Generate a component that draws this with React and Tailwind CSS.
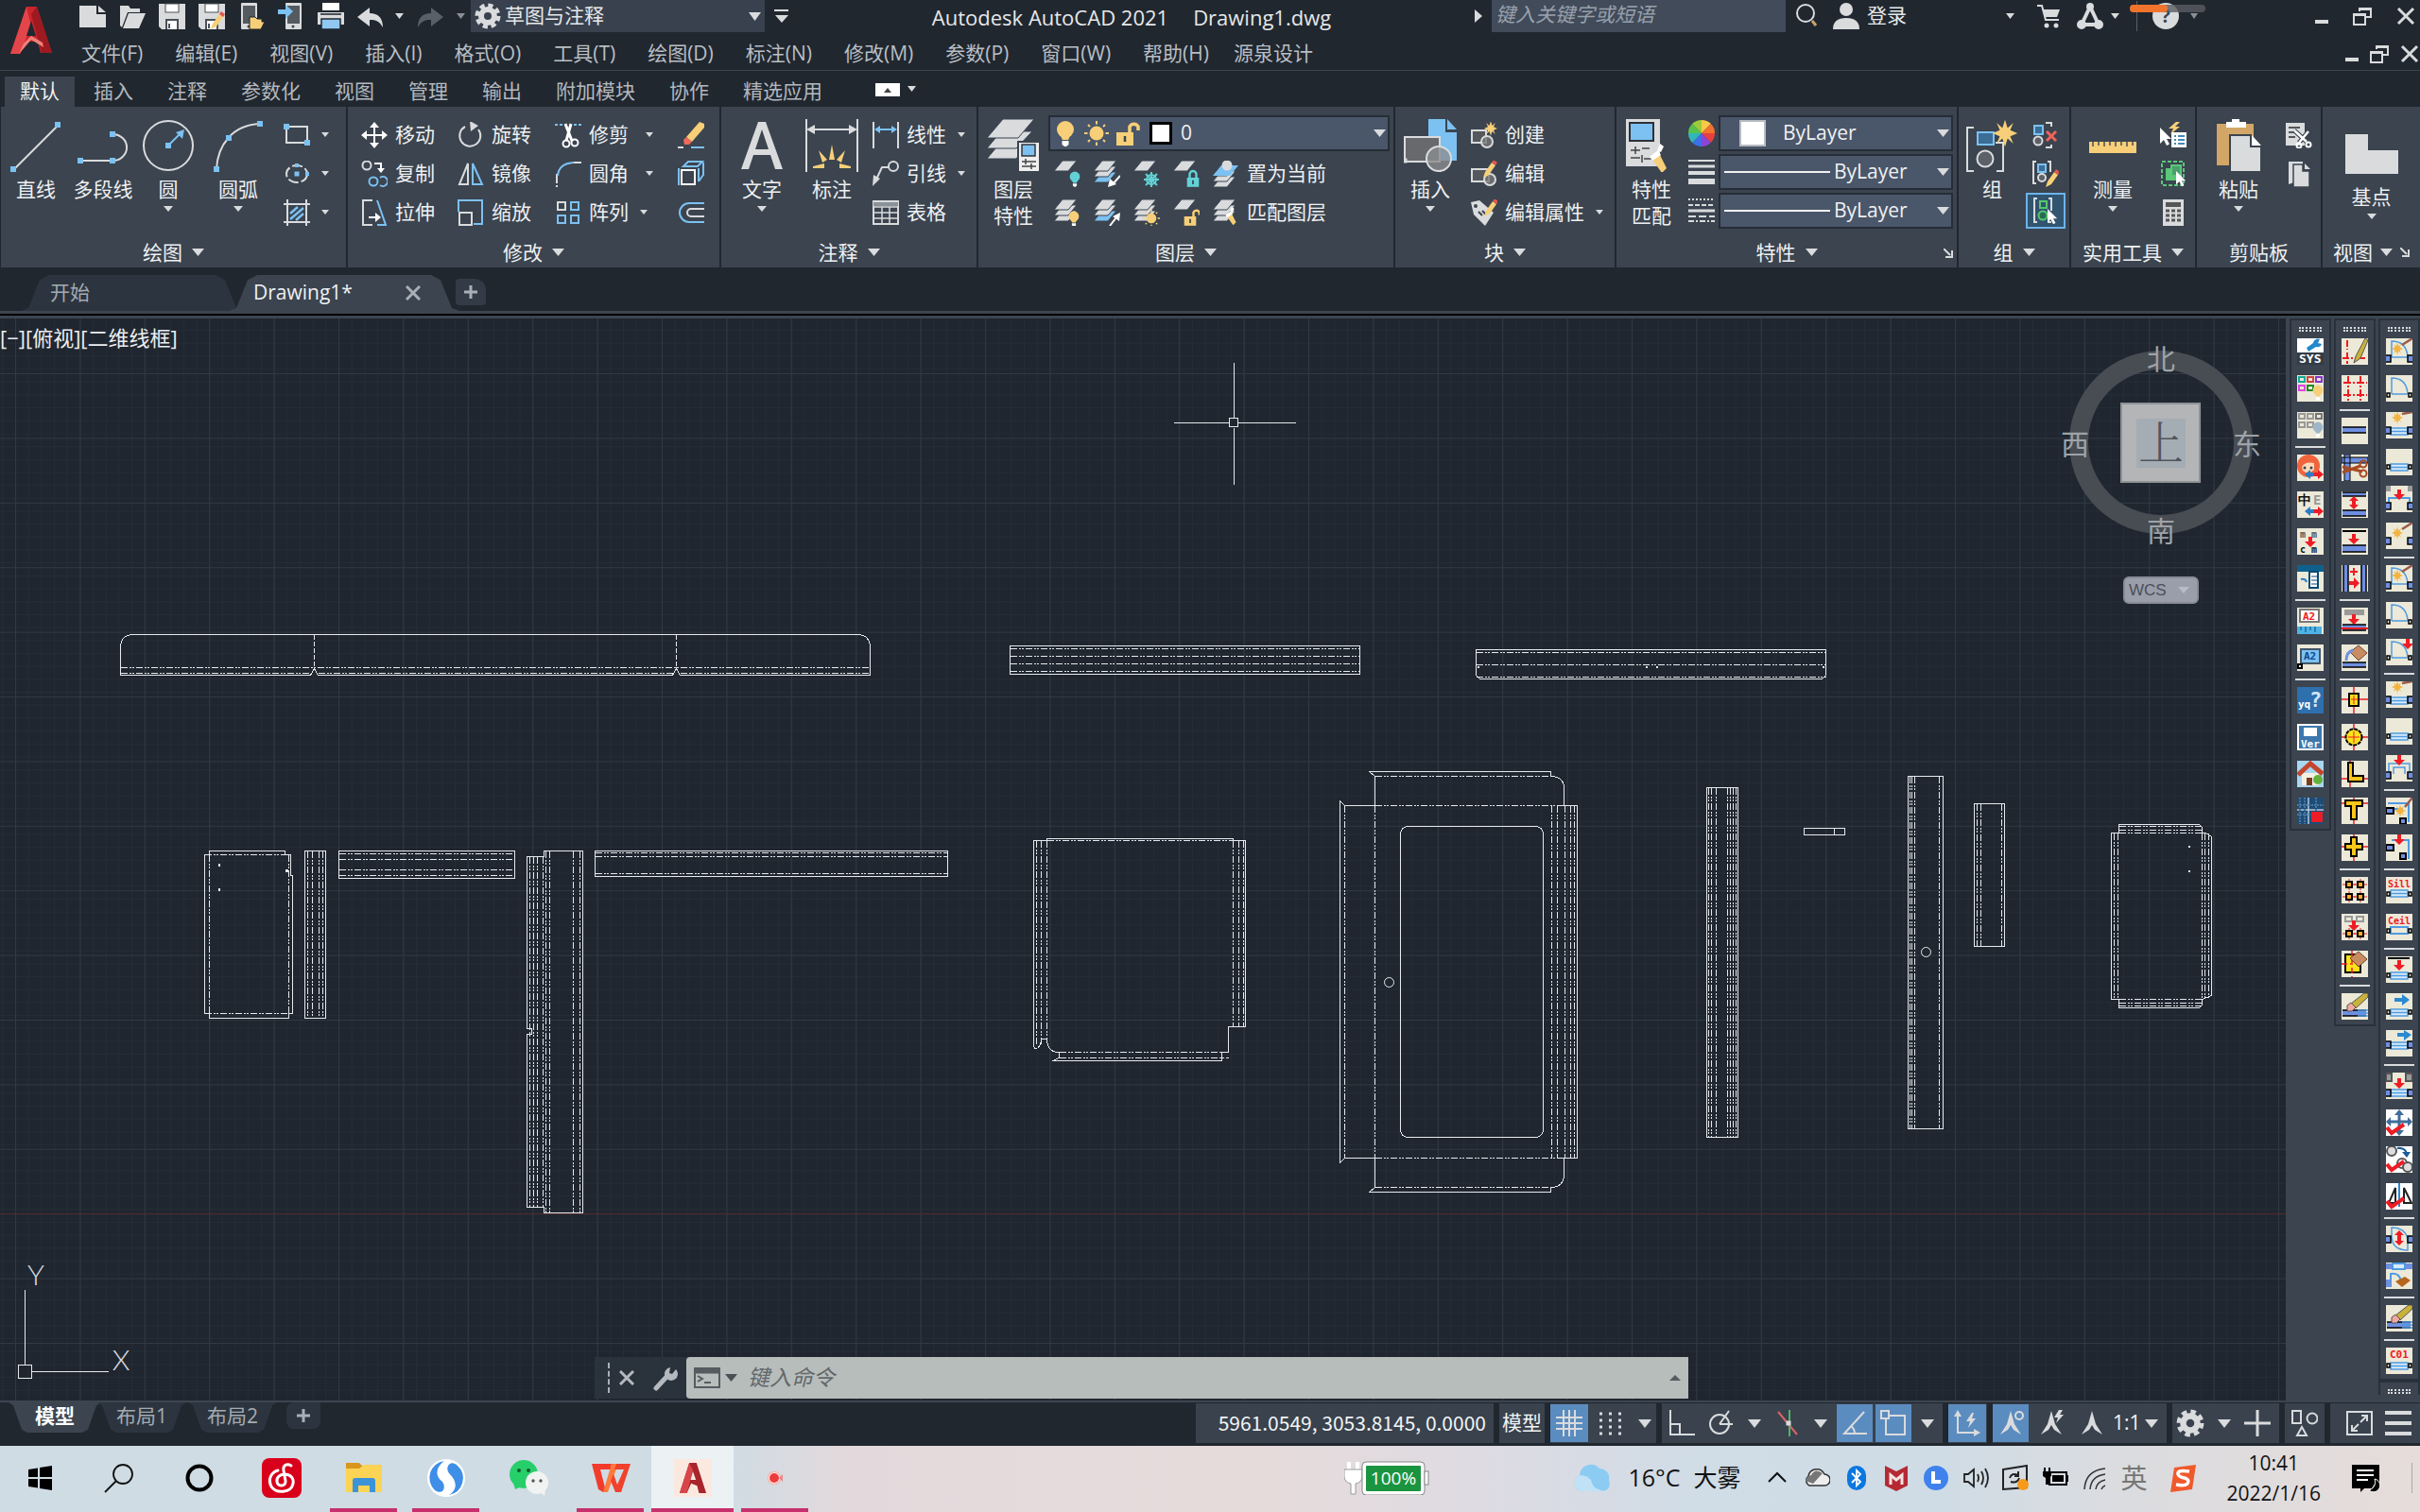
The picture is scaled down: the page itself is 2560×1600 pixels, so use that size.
import React from "react";

const W = "#d9dbdd";
const B = "#7cc1f2";
const Y = "#f7cf78";
const T = "#62d2d6";

/* ---------- shared pieces ---------- */

function Tri({ w = 10, h = 6, up = false, c = W }) {
  return (
    <svg width={w} height={h} viewBox="0 0 10 6" preserveAspectRatio="none" className="shrink-0">
      <path d={up ? "M0 6L5 0L10 6Z" : "M0 0H10L5 6Z"} fill={c} />
    </svg>
  );
}

function Ico({ s = 28, children }) {
  return (
    <svg width={s} height={s} viewBox={`0 0 ${s} ${s}`} fill="none" stroke={W} strokeWidth="2" className="shrink-0">
      {children}
    </svg>
  );
}

const Sq = ({ x, y, s = 6, c = B }) => <rect x={x - s / 2} y={y - s / 2} width={s} height={s} fill={c} stroke="none" />;

function Big({ label, icon, caret, className = "" }) {
  return (
    <button className={`flex shrink-0 flex-col items-center pt-1 leading-7 ${className}`}>
      <Ico s={56}>{icon}</Ico>
      <span className="mt-1 whitespace-pre-line">{label}</span>
      {caret && <span className="flex pt-1"><Tri /></span>}
    </button>
  );
}

function Small({ label, icon, caret, aria, className = "" }) {
  return (
    <button aria-label={aria || label} className={`flex h-[41px] items-center gap-2 whitespace-nowrap ${className}`}>
      <Ico>{icon}</Ico>
      {label}
      {caret && <span className={`flex ${caret === "wide" ? "ml-2.5" : "ml-1"}`}><Tri w={8} h={5} /></span>}
    </button>
  );
}

function Panel({ title, caret = true, corner, className = "", children }) {
  return (
    <section className={`flex h-[170px] min-w-0 flex-col justify-between overflow-hidden bg-[#3b444f] pt-[9px] ${className}`}>
      <div className="flex">{children}</div>
      <div className="relative flex h-8 items-center justify-center gap-2.5 leading-8">
        {title}
        {caret && <Tri w={13} h={8} />}
        {corner && (
          <button aria-label={`${title}设置`} className="absolute right-1 top-3">
            <svg width="10" height="10" viewBox="0 0 10 10" fill="none" stroke={W} strokeWidth="2"><path d="M0 0L7 7M9 2V9H2" /></svg>
          </button>
        )}
      </div>
    </section>
  );
}

/* ---------- ribbon drawings ---------- */

const Stack = ({ x = 0, y = 0, c = W, n = 3, last }) => (
  <g stroke="none">
    {Array.from({ length: n }, (_, i) => n - 1 - i).map((i) => (
      <path key={i} d={`M${x} ${y + 11 + i * 6}L${x + 9} ${y + i * 6}H${x + 24}L${x + 15} ${y + 11 + i * 6}Z`} fill={i === n - 1 && last ? last : c} stroke="#3b444f" strokeWidth="1" />
    ))}
  </g>
);
const Bulb = ({ x, y, c = Y, s = 1 }) => (
  <g stroke="none" transform={`translate(${x} ${y}) scale(${s})`}>
    <circle cx="0" cy="0" r="9" fill={c} /><path d="M-6 5H6L3 11H-3Z" fill={c} /><path d="M-3.500 12H3.500V16L1 18H-1L-3.500 16Z" fill="#fff" />
  </g>
);
const Sun = ({ x, y, s = 1 }) => (
  <g transform={`translate(${x} ${y}) scale(${s})`} stroke={Y}>
    <circle r="7.500" fill={Y} stroke="none" />
    <path d="M0 -13V-9.500M0 9.500V13M-13 0H-9.500M9.500 0H13M-9 -9L-7 -7M7 7L9 9M-9 9L-7 7M7 -7L9 -9" />
  </g>
);
const Lock = ({ x, y, c = Y, s = 1, open }) => (
  <g transform={`translate(${x} ${y}) scale(${s})`}>
    <rect x="-9" y="0" width="18" height="14" fill={c} stroke="none" />
    <path d={open ? "M5 0V-6A5 5 0 0 1 14 -6V-2" : "M-5 0V-5A5 5 0 0 1 5 -5V0"} stroke={c} strokeWidth="3.500" />
    <path d="M0 4V10" stroke="#3b444f" strokeWidth="2.500" />
  </g>
);
const Pencil = ({ x, y }) => (
  <g stroke="none" transform={`translate(${x} ${y})`}>
    <path d="M0 14L2 8L9 -2L13 1L6 11Z" fill={Y} /><path d="M9 -2L11 -5L15 -2L13 1Z" fill="#e0584f" />
  </g>
);
const Burst = ({ x, y, s = 1, c = Y }) => (
  <path transform={`translate(${x} ${y}) scale(${s})`} stroke="none" fill={c} d="M0 -13L2.500 -5L8 -10L5 -3L12 0L5 3L8 10L2.500 5L0 13L-2.500 5L-8 10L-5 3L-12 0L-5 -3L-8 -10L-2.500 -5Z" />
);
const Cursor = ({ x, y, s = 1 }) => (
  <path transform={`translate(${x} ${y}) scale(${s})`} d="M0 0V17L4 13L7 19L10 17.500L7 12H12Z" fill="#fff" stroke="none" />
);
const Brush = ({ x, y, s = 1 }) => (
  <g stroke="none" transform={`translate(${x} ${y}) scale(${s})`}>
    <path d="M0 6L8 0L17 18L12 23Z" fill={Y} /><path d="M-1 6L8 -1L11 4L2 10Z" fill="#fff" /><path d="M8 -6L12 -3L9 3L5 1Z" fill="#fff" transform="translate(2 -2)" />
  </g>
);

const R = {
  line: <><path d="M4 54L52 6" /><Sq x={4} y={53} /><Sq x={51} y={6} /></>,
  pline: <><path d="M4 44H38A14 13 0 0 0 38 16" /><Sq x={4} y={44} /><Sq x={38} y={44} /><Sq x={38} y={16} /></>,
  circle: <><circle cx="28" cy="28" r="26" /><path d="M28 28L42 14" stroke={B} /><path d="M36 14L45 11L43 21Z" fill={B} stroke="none" /><Sq x={28} y={28} /></>,
  arc: <><path d="M5 53C6 28 22 6 51 5" /><Sq x={5} y={53} /><Sq x={18} y={20} /><Sq x={51} y={5} /></>,
  rect: <><rect x="3" y="5" width="22" height="17" /><Sq x={3} y={5} /><Sq x={25} y={22} /></>,
  ellipse: <><ellipse cx="14" cy="14" rx="11" ry="9" strokeDasharray="11 3" /><Sq x={14} y={14} s={5} /><Sq x={25} y={14} s={4} /><Sq x={14} y={5} s={4} /></>,
  hatch: <><path d="M0 5H28M0 24H28M4 0V28M24 0V28" /><path d="M7 15L15 8M7 21L21 9M13 22L21 15" stroke={B} strokeWidth="2.500" /></>,
  move: <g fill="#fff" stroke="#fff"><path d="M14 4V24M4 14H24" /><path d="M14 0L19 6H9ZM14 28L19 22H9ZM0 14L6 9V19ZM28 14L22 9V19Z" stroke="none" /></g>,
  rotate: <><path d="M8 5A11 11 0 1 0 22 8" /><path d="M13 -1L22 4L14 10Z" fill={W} stroke="none" /></>,
  trim: <><path d="M0 3H8M20 3H28" strokeDasharray="3 2" stroke={B} /><path d="M11 2L18 20M17 2L12 20" stroke="#fff" strokeWidth="3" /><circle cx="12" cy="23" r="3.500" stroke="#fff" /><circle cx="21" cy="22" r="3.500" stroke="#fff" /></>,
  erase: <><g stroke="none"><path d="M9 16L23 0L28 2V6L15 21Z" fill={Y} /><path d="M6 19L9 16L15 21L12 24H7Z" fill="#ef6a5b" /></g><path d="M0 27H6" /><path d="M14 27H28" stroke={B} /></>,
  copy: <><circle cx="6" cy="5" r="4.500" /><path d="M14 3H21V10" stroke="#fff" /><path d="M17 8H25L21 13Z" fill="#fff" stroke="none" /><circle cx="13" cy="22" r="4.500" stroke={B} /><path d="M20 18A5 5 0 1 1 20 26" stroke={B} /></>,
  mirror: <><path d="M11 3V25H2Z" /><path d="M16 3V25H26Z" stroke={B} /></>,
  fillet: <><path d="M2 14V28M20 2H28" strokeDasharray="10 2" /><path d="M3 16Q4 3 20 2" stroke={B} /></>,
  box: <><rect x="4" y="10" width="14" height="15" stroke="#fff" /><path d="M1 8V26M6 6L11 1H26L21 6ZM22 22L27 15V2M22 8V22" stroke={B} /></>,
  stretch: <><path d="M12 27H2V1H12" /><path d="M17 1L26 27H17" stroke={B} /><path d="M8 19H17" stroke="#fff" /><path d="M15 14V24L21 19Z" fill="#fff" stroke="none" /></>,
  scale: <><path d="M1 13V1H26V26H17" stroke={B} /><rect x="2" y="14" width="13" height="13" /></>,
  array: <><rect x="3" y="3" width="8" height="8" /><g stroke={B}><rect x="17" y="3" width="8" height="8" /><rect x="3" y="17" width="8" height="8" /><rect x="17" y="17" width="8" height="8" /></g></>,
  offset: <><path d="M28 4H12A10 10 0 0 0 12 24H28" stroke={B} /><path d="M28 10H14A4 4 0 0 0 14 18H28" /></>,
  dim: <><path d="M1 0V56M55 0V56M5 11H51" /><path d="M1 11L10 6V16ZM55 11L46 6V16Z" fill={W} stroke="none" /><g fill={Y} stroke="none"><path d="M28 27L31 43H25ZM14 33L23 43L18 46ZM42 33L33 43L38 46ZM8 50L20 47V52H8ZM48 50L36 47V52H48Z" /></g></>,
  linear: <><path d="M1 0V28M27 0V28" /><path d="M4 8H24" stroke={B} /><path d="M2 8L8 4V12ZM26 8L20 4V12Z" fill={B} stroke="none" /></>,
  leader: <><circle cx="22" cy="6" r="5" /><path d="M17 7H10L3 22" /><path d="M0 27L1 15L8 19Z" fill={W} stroke="none" /></>,
  table: <><rect x="1" y="2" width="26" height="24" /><path d="M1 8H27M1 14H27M1 20H27M10 8V26M18 8V26" strokeWidth="1.500" /><path d="M1 5H27" strokeWidth="4" stroke="#8b929a" /></>,
  layers: <><g stroke="#3b444f" strokeWidth="1"><path d="M0 42L15 24H45L31 42Z" fill={W} /><path d="M0 31L15 13H48L31 31Z" fill={W} /><path d="M0 20L17 0H50L33 20Z" fill={W} /></g><rect x="33" y="24" width="23" height="32" fill="#eee" stroke="#3b444f" /><rect x="37" y="27" width="14" height="12" fill={B} stroke="#30353c" strokeWidth="1.500" /><path d="M37 45H52M37 50H52M41 42V48M47 47V53" stroke="#444" strokeWidth="1.500" /></>,
  l1: <><Stack y={0} n={1} /><Bulb x={22} y={17} c={T} s={0.6} /></>,
  l2: <><Stack last={B} /><path d="M28 16L20 25" stroke="#fff" /><path d="M15 28L17 19L24 25Z" fill="#fff" stroke="none" /></>,
  l3: <><Stack n={1} /><path d="M19 12V28M11 20H27M13 14L25 26M25 14L13 26" stroke={T} /><circle cx="19" cy="20" r="5" stroke={T} /></>,
  l4: <><Stack n={1} /><Lock x={21} y={18} c={T} s={0.7} /></>,
  l5: <><Stack x={0} y={5} n={3} /><path d="M0 16L9 5H27L18 16Z" fill={B} stroke="none" /><circle cx="15" cy="5" r="5.500" fill={W} stroke="none" /></>,
  l6: <><Stack /><Bulb x={21} y={18} s={0.6} /></>,
  l7: <><Stack last={B} /><path d="M17 28L24 19" stroke="#fff" /><path d="M28 14L27 23L20 18Z" fill="#fff" stroke="none" /></>,
  l8: <><Stack /><Sun x={19} y={20} s={0.7} /></>,
  l9: <><Stack n={1} /><Lock x={18} y={18} s={0.7} open /></>,
  l10: <><Stack /><Brush x={14} y={13} s={0.62} /></>,
  insert: <><path d="M26 0H44V14H56V44H26Z" fill={B} stroke="none" /><path d="M46 0L56 11H46Z" fill={B} stroke="none" /><rect x="1" y="19" width="37" height="26" fill="#67696c" /><circle cx="37" cy="42" r="13" fill="#8b8d90" fillOpacity=".8" /><Sq x={1} y={44} s={5} c={W} /></>,
  create: <><rect x="1" y="9" width="15" height="13" fill="#55585c" /><circle cx="17" cy="21" r="6" fill="#777" fillOpacity=".8" /><Burst x={21} y={7} s={0.6} /></>,
  editb: <><rect x="1" y="9" width="18" height="13" fill="#55585c" /><circle cx="20" cy="20" r="6" fill="#777" fillOpacity=".8" /><Pencil x={13} y={4} /></>,
  attr: <><path d="M0 3L9 1L24 14L15 28L3 16Z" fill={W} stroke="none" /><circle cx="5" cy="7" r="2" fill="#3b444f" stroke="none" /><path d="M8 13L12 17M12 12L16 16" stroke="#3b444f" /><Pencil x={14} y={4} /></>,
  match: <><rect x="1" y="0" width="36" height="50" fill={W} stroke="none" /><rect x="5" y="4" width="25" height="19" fill={B} stroke="#2c3137" /><path d="M6 33H16M6 41H16M11 29V37M18 38V46M18 31H26M20 42H28" stroke="#444" strokeWidth="1.500" /><Brush x={27} y={34} /></>,
  lw: <g stroke={W}><path d="M0 2H28" /><path d="M0 8H28" strokeWidth="3" /><path d="M0 15H28" strokeWidth="4" /><path d="M0 24H28" strokeWidth="6" /></g>,
  lt: <g stroke={W}><path d="M0 2H28" strokeDasharray="2 2" /><path d="M0 8H28" strokeDasharray="5 2" /><path d="M0 14H28" strokeWidth="3" /><path d="M0 20H28" strokeDasharray="8 3" /><path d="M0 25H28" strokeDasharray="6 2 2 2" /></g>,
  group: <><path d="M8 9H1V55H8M31 25H39V55H32" /><rect x="12" y="14" width="17" height="13" fill="#3b6d96" stroke={B} /><circle cx="20" cy="42" r="8.500" fill="#5c6168" /><Burst x={41} y={15} s={1.1} /></>,
  ungroup: <><path d="M14 1H20V5M20 24V27H14" /><rect x="2" y="4" width="9" height="9" fill="#3b6d96" stroke={B} /><circle cx="6" cy="20" r="4.500" fill="#5c6168" /><path d="M15 10L25 20M25 10L15 20" stroke="#f0635c" strokeWidth="3" /></>,
  gedit: <><path d="M4 1H1V24H4M16 1H19V12" /><rect x="6" y="4" width="8" height="8" fill="#3b6d96" stroke={B} /><circle cx="10" cy="18" r="4" fill="#5c6168" /><Pencil x={14} y={14} /></>,
  gsel: <><path d="M5 1H2V26H5M17 1H20V14M16 26H20" /><rect x="8" y="4" width="7" height="7" stroke="#54c66e" /><circle cx="11" cy="19" r="4.500" stroke="#54c66e" fill="#2b6a52" /><Cursor x={16} y={12} s={0.85} /></>,
  ruler: <><rect x="3" y="24" width="50" height="12" fill={Y} stroke="none" /><path d="M7 24V29M13 24V28M19 24V29M25 24V28M31 24V29M37 24V28M43 24V29M49 24V28" stroke="#4b4f55" strokeWidth="1.500" /></>,
  qsel: <><rect x="12" y="11" width="16" height="16" fill="#fff" stroke="none" /><path d="M15 15H17M19 15H26M15 19H17M19 19H26M15 23H17M19 23H26" stroke="#4489b8" /><path d="M14 0L5 8H10L7 14L17 6H12L18 0Z" fill={Y} stroke="none" transform="translate(4 -1)" /><Cursor x={0} y={6} s={1} /></>,
  selall: <><rect x="2" y="1" width="23" height="25" stroke="#5ac779" strokeDasharray="4 2" /><rect x="7" y="9" width="11" height="11" fill="#5ac779" stroke="#5ac779" /><rect x="12" y="5" width="10" height="11" fill="#4a9f6d" stroke="#5ac779" /><Cursor x={17} y={11} s={0.85} /></>,
  calc: <><rect x="3" y="0" width="22" height="28" fill={W} stroke="none" /><rect x="6" y="3" width="16" height="5" fill="#555" stroke="none" /><path d="M6 12H22M6 17H22M6 22H22" stroke="#555" strokeWidth="3" strokeDasharray="4 2" /></>,
  paste: <><path d="M5 5H44V49H5Z" fill="#d1a667" stroke="none" /><path d="M15 3H21V0H29V3H36V9H15Z" fill="#fff" stroke="none" /><path d="M19 17H41V29H52V56H19Z" fill={W} stroke="#3b444f" /><path d="M42 17L52 28H42Z" fill="#fff" stroke="none" /></>,
  cut: <><rect x="0" y="1" width="20" height="24" fill={W} stroke="none" /><path d="M3 6H15M3 11H12M3 16H10" stroke="#555" /><path d="M9 9L22 21M24 10L14 22" stroke="#3b444f" strokeWidth="5" /><path d="M9 9L22 21M24 10L14 22" stroke="#fff" strokeWidth="2.500" /><circle cx="14" cy="25" r="2.500" stroke="#fff" /><circle cx="24" cy="24" r="2.500" stroke="#fff" /></>,
  copyclip: <><path d="M3 25V1H18V20" fill={W} stroke="none" /><path d="M8 4H18V11H25V28H8Z" fill={W} stroke="#3b444f" strokeWidth="1.500" /><path d="M20 3L26 9H20Z" fill={W} stroke="none" /></>,
  base: <path d="M0 8H24V25H56V50H0Z" fill={W} stroke="none" />,
};

const Wheel = () => (
  <Ico>
    {["#f7c948", "#f2722e", "#e8403f", "#8a45d8", "#3d6fe8", "#34b6b8", "#58c14e", "#9ccb3b"].map((c, i) => {
      const a = (i * Math.PI) / 4 - Math.PI / 2, b = a + Math.PI / 4;
      return <path key={c} stroke="none" fill={c} d={`M14 14L${14 + 14 * Math.cos(a)} ${14 + 14 * Math.sin(a)}A14 14 0 0 1 ${14 + 14 * Math.cos(b)} ${14 + 14 * Math.sin(b)}Z`} />;
    })}
  </Ico>
);

function PropSelect({ label, lead, className = "" }) {
  return (
    <label className="flex h-[41px]">
      <span className="flex h-[38px] flex-1 items-center border-2 border-[#262d36] bg-[#4a5669] pl-1 pr-0.5">
        {lead}
        <select aria-label={label} className={`min-w-0 flex-1 appearance-none bg-transparent outline-none ${className}`}>
          <option>ByLayer</option>
        </select>
        <Tri w={13} h={8} />
      </span>
    </label>
  );
}

function Ribbon() {
  return (
    <div className="flex gap-0.5 bg-[#20272f] pl-px text-[21px] text-[#eef0f2]">
      <Panel title="绘图" className="flex-[365_1_0%]">
        <Big className="w-[74px]" label="直线" icon={R.line} />
        <Big className="w-[68px]" label="多段线" icon={R.pline} />
        <Big className="w-[70px]" label="圆" icon={R.circle} caret />
        <Big className="w-[78px]" label="圆弧" icon={R.arc} caret />
        <div className="pl-[9px]">
          <Small aria="矩形" icon={R.rect} caret />
          <Small aria="椭圆" icon={R.ellipse} caret />
          <Small aria="图案填充" icon={R.hatch} caret />
        </div>
      </Panel>
      <Panel title="修改" className="flex-[393_1_0%]">
        <div className="grid grid-cols-[102px_103px_130px_28px] pl-3.5">
          <Small label="移动" icon={R.move} />
          <Small label="旋转" icon={R.rotate} />
          <Small label="修剪" icon={R.trim} caret="wide" />
          <Small aria="删除" icon={R.erase} />
          <Small label="复制" icon={R.copy} />
          <Small label="镜像" icon={R.mirror} />
          <Small label="圆角" icon={R.fillet} caret="wide" />
          <Small aria="分解" icon={R.box} />
          <Small label="拉伸" icon={R.stretch} />
          <Small label="缩放" icon={R.scale} />
          <Small label="阵列" icon={R.array} caret />
          <Small aria="偏移" icon={R.offset} />
        </div>
      </Panel>
      <Panel title="注释" className="flex-[270_1_0%]">
        <Big className="w-[86px]" label="文字" caret icon={<path d="M6 53L24 3H32L50 53H42L37 38H19L14 53ZM21 32H35L28 11Z" fill={W} stroke="none" />} />
        <Big className="w-[62px]" label="标注" icon={R.dim} />
        <div className="pl-3">
          <Small label="线性" icon={R.linear} caret />
          <Small label="引线" icon={R.leader} caret />
          <Small label="表格" icon={R.table} />
        </div>
      </Panel>
      <Panel title="图层" className="flex-[439_1_0%]">
        <Big className="w-[74px]" label={"图层\n特性"} icon={R.layers} />
        <div className="min-w-0 flex-1 pr-1">
          <label className="flex h-[41px]">
            <span className="flex h-[38px] flex-1 items-center gap-[5px] border-2 border-[#262d36] bg-[#4a5669] pl-0.5 pr-0.5">
              <Ico><Bulb x={14} y={10} /></Ico>
              <Ico><Sun x={14} y={14} /></Ico>
              <Ico><Lock x={11} y={13} open /></Ico>
              <span className="ml-1 h-6 w-6 border-[3px] border-black bg-white" />
              <select aria-label="图层" className="ml-1 min-w-0 flex-1 appearance-none bg-transparent outline-none"><option>0</option></select>
              <Tri w={13} h={8} />
            </span>
          </label>
          {[["置为当前", ["l1", "l2", "l3", "l4", "l5"]], ["匹配图层", ["l6", "l7", "l8", "l9", "l10"]]].map(([t, ks]) => (
            <div key={t} className="flex items-center">
              {ks.slice(0, 4).map((k) => <Small key={k} aria={`图层工具 ${k}`} icon={R[k]} className="w-[42px] pl-1.5" />)}
              <Small label={t} icon={R[ks[4]]} className="pl-1.5" />
            </div>
          ))}
        </div>
      </Panel>
      <Panel title="块" className="flex-[232_1_0%]">
        <Big className="w-[74px]" label="插入" icon={R.insert} caret />
        <div className="pl-1.5">
          <Small label="创建" icon={R.create} />
          <Small label="编辑" icon={R.editb} />
          <Small label="编辑属性" icon={R.attr} caret />
        </div>
      </Panel>
      <Panel title="特性" corner className="flex-[360_1_0%]">
        <Big className="w-[74px]" label={"特性\n匹配"} icon={R.match} />
        <div className="flex w-8 flex-col items-center">
          <button aria-label="颜色" className="h-[41px] pb-1"><Wheel /></button>
          <Small aria="线宽" icon={R.lw} className="pb-1" />
          <Small aria="线型" icon={R.lt} className="pb-1" />
        </div>
        <div className="min-w-0 flex-1 pl-0.5 pr-1">
          <PropSelect label="对象颜色" className="ml-[18px]" lead={<span className="ml-4 h-7 w-7 border-2 border-[#b8bcc2] bg-white" />} />
          <PropSelect label="线宽" className="ml-1" lead={<span className="h-0.5 w-28 bg-[#f2f2f2]" />} />
          <PropSelect label="线型" className="ml-1" lead={<span className="h-0.5 w-28 bg-[#f2f2f2]" />} />
        </div>
      </Panel>
      <Panel title="组" className="flex-[117_1_0%]">
        <Big className="w-[71px]" label="组" icon={R.group} />
        <div className="flex w-[42px] flex-col items-center">
          <Small aria="解除编组" icon={R.ungroup} />
          <Small aria="组编辑" icon={R.gedit} />
          <button aria-label="启用组选择" className="flex h-[38px] w-[42px] items-center justify-center border-2 border-[#6cb3e8] bg-[#31546f]"><Ico>{R.gsel}</Ico></button>
        </div>
      </Panel>
      <Panel title="实用工具" className="flex-[131_1_0%]">
        <Big className="w-[88px]" label="测量" icon={R.ruler} caret />
        <div className="flex w-10 flex-col items-center">
          <Small aria="快速选择" icon={R.qsel} />
          <Small aria="全部选择" icon={R.selall} />
          <Small aria="快速计算器" icon={R.calc} />
        </div>
      </Panel>
      <Panel title="剪贴板" caret={false} className="flex-[131_1_0%]">
        <Big className="w-[88px]" label="粘贴" icon={R.paste} caret />
        <div className="flex w-10 flex-col items-center">
          <Small aria="剪切" icon={R.cut} />
          <Small aria="复制剪裁" icon={R.copyclip} />
        </div>
      </Panel>
      <section className="flex h-[170px] min-w-0 flex-[103_1_0%] flex-col items-center justify-between overflow-hidden bg-[#3b444f] pt-[9px]">
        <Big className="pt-3" label="基点" icon={R.base} caret />
        <div className="flex h-8 items-center gap-2 leading-8">
          视图
          <Tri w={13} h={8} />
          <button aria-label="视图设置">
            <svg width="10" height="10" viewBox="0 0 10 10" fill="none" stroke={W} strokeWidth="2"><path d="M0 0L7 7M9 2V9H2" /></svg>
          </button>
        </div>
      </section>
    </div>
  );
}

/* ---------- title bar and menus ---------- */

const Floppy = () => <><path d="M0 1H28V28H3L0 25Z" fill={W} stroke="none" /><rect x="7" y="1" width="14" height="9" fill="#fff" stroke="#4a5058" strokeWidth="1" /><path d="M7 17H21V28H7Z" fill="#4a5058" stroke="none" /><path d="M9 19H19V28H9Z" fill="#fff" stroke="none" /><path d="M11 22V27" stroke="#4a5058" /></>;
const Phone = () => <><rect x="3" y="0" width="17" height="28" rx="1" fill={W} stroke="none" /><rect x="5" y="3" width="13" height="19" fill="#555a60" stroke="none" /><circle cx="11" cy="25" r="1.500" fill="#444" stroke="none" /></>;
const Q = {
  新建: <path d="M0 3H18V12H28V26H0ZM20 3L28 10H20Z" fill={W} stroke="none" />,
  打开: <path d="M1 24V3H10L12 6H22V10H9L3 26ZM10 11H28L21 27H4Z" fill={W} stroke="none" />,
  保存: <Floppy />,
  另存为: <><Floppy /><Pencil x={13} y={14} /></>,
  打开移动: <><Phone /><path d="M12 28V15H18L20 17H25V20L28 20L24 28Z" fill={Y} stroke="#20272f" strokeWidth="1" /></>,
  保存移动: <><g transform="translate(5 0)"><Phone /></g><path d="M0 7H8V2L16 9L8 17V12H0Z" fill={B} stroke="none" /></>,
  打印: <><path d="M5 0H23V8H5Z" fill="#fff" stroke="none" /><path d="M0 10H28V23H0Z" fill={W} stroke="none" /><path d="M3 12H25" stroke="#4a5058" /><path d="M4 17H24V28H4Z" fill="#8fc9f2" stroke="#20272f" strokeWidth="1.500" /></>,
  放弃: <path d="M0 15L13 5V11C22 11 27 16 27 26C23 19 20 18 13 18V25Z" fill={W} stroke="none" />,
  重做: <path d="M28 15L15 5V11C6 11 1 16 1 26C5 19 8 18 15 18V25Z" fill="#5a6068" stroke="none" />,
};

const Gear = ({ s = 28, c = W }) => (
  <svg width={s} height={s} viewBox="0 0 28 28" className="shrink-0">
    <circle cx="14" cy="14" r="11" fill="none" stroke={c} strokeWidth="5" strokeDasharray="5 3.640" />
    <circle cx="14" cy="14" r="7" fill="none" stroke={c} strokeWidth="6" />
  </svg>
);

function WinBtns({ gap }) {
  return (
    <div className={`flex items-center ${gap}`}>
      <button aria-label="最小化"><svg width="14" height="20" viewBox="0 0 14 20"><rect y="14" width="14" height="4" fill={W} /></svg></button>
      <button aria-label="还原"><svg width="20" height="20" viewBox="0 0 20 20" fill="none" stroke={W} strokeWidth="2"><path d="M7 5V2H19V11H14M7 3H19M1 8H13V19H1ZM1 9H13" /></svg></button>
      <button aria-label="关闭"><svg width="20" height="20" viewBox="0 0 20 20" stroke={W} strokeWidth="3"><path d="M2 2L18 18M18 2L2 18" /></svg></button>
    </div>
  );
}

const MENUS = ["文件(F)", "编辑(E)", "视图(V)", "插入(I)", "格式(O)", "工具(T)", "绘图(D)", "标注(N)", "修改(M)", "参数(P)", "窗口(W)", "帮助(H)"];
const TABS = ["插入", "注释", "参数化", "视图", "管理", "输出", "附加模块", "协作", "精选应用"];

const LogoA = ({ w, h }) => (
  <svg width={w} height={h} viewBox="0 0 44 50" className="shrink-0">
    <path d="M17 0H28L44 49H32L29 37H19L14 44L10 50H0Z" fill="#c9252b" />
    <path d="M17 0L19 9L22 20L10 50H0Z" fill="#e2464a" />
    <path d="M28 0L44 49H33L22 8Z" fill="#9c1a20" />
    <path d="M14 39L22 31L34 38L35 43L22 35L9 50Z" fill="#f08079" />
    <path d="M22 15L27 31H17Z" fill="#20272f" />
  </svg>
);

function TitleArea() {
  return (
    <header className="flex border-b border-[#3b434d] text-[21px] text-[#e6e8ea]">
      <button aria-label="应用程序菜单" className="flex w-[66px] items-center justify-center pb-2.5"><LogoA w={44} h={50} /></button>
      <div className="min-w-0 flex-1">
        <div className="flex h-9 items-start justify-between">
          <div className="flex h-[34px] items-center">
            <div className="flex items-center gap-3.5 pl-[18px]">
              {Object.entries(Q).slice(0, 8).map(([k, v]) => <button key={k} aria-label={k}><Ico>{v}</Ico></button>)}
            </div>
            <div className="flex items-center gap-3.5 pl-3">
              <Tri w={9} h={6} />
              <button aria-label="重做"><Ico>{Q.重做}</Ico></button>
              <Tri w={9} h={6} c="#8b9097" />
            </div>
            <label className="ml-1.5 flex h-[34px] w-[311px] items-center gap-1 bg-[#38414d] px-1">
              <Gear />
              <select aria-label="工作空间" className="flex-1 appearance-none bg-transparent outline-none"><option>草图与注释</option></select>
              <Tri w={13} h={9} />
            </label>
            <button aria-label="自定义快速访问工具栏" className="ml-2.5 flex flex-col items-center gap-1"><span className="h-0.5 w-[15px] bg-[#d9dbdd]" /><Tri w={14} h={8} /></button>
          </div>
          <h1 className="flex gap-[26px] whitespace-nowrap text-[22px] leading-9"><span>Autodesk AutoCAD 2021</span><span>Drawing1.dwg</span></h1>
          <div className="flex h-[34px] items-center">
            <svg width="8" height="14" viewBox="0 0 8 14" className="mr-2.5"><path d="M0 0L8 7L0 14Z" fill={W} /></svg>
            <input aria-label="搜索" placeholder="键入关键字或短语" className="h-[34px] w-[311px] bg-[#414b5a] px-1 pb-1 italic outline-none placeholder:text-[#98a0ab]" />
            <button aria-label="搜索" className="ml-2.5"><Ico><circle cx="11" cy="11" r="9" /><path d="M18 19L22 24" stroke="#c9a568" strokeWidth="3" /></Ico></button>
            <button className="ml-3 flex items-center gap-2"><Ico><circle cx="14" cy="7" r="7" fill={W} stroke="none" /><path d="M0 28Q0 16 14 16T28 28Z" fill={W} stroke="none" /></Ico>登录</button>
            <span className="ml-[105px]"><Tri w={9} h={6} /></span>
            <button aria-label="商店" className="ml-6"><Ico><path d="M0 3H5L9 18H23" /><path d="M6 7H24L21 15H8Z" fill={W} stroke="none" /><circle cx="10" cy="24" r="2.500" fill={W} stroke="none" /><circle cx="20" cy="24" r="2.500" fill={W} stroke="none" /></Ico></button>
            <button aria-label="Autodesk App Store" className="ml-3.5"><Ico><path d="M14 4L5 23H23Z" strokeWidth="4" strokeLinejoin="round" /><circle cx="5" cy="23" r="4" fill={W} /><circle cx="23" cy="23" r="4" fill={W} /><circle cx="14" cy="4" r="3" fill={W} /></Ico></button>
            <span className="ml-2"><Tri w={9} h={6} /></span>
            <span className="ml-[18px] h-8 w-px bg-[#5a6068]" />
            <div className="relative ml-4 flex items-center gap-3">
              <button aria-label="帮助" className="flex h-7 w-7 items-center justify-center rounded-full bg-[#d9dbdd] text-xl font-bold leading-7 text-[#3b444f]">?</button>
              <Tri w={8} h={6} c="#8b9097" />
              <span className="absolute -left-6 top-0.5 flex h-2 w-20 rounded bg-[#5a5d61]/80"><span className="w-10 rounded bg-[#f2742c]" /></span>
            </div>
            <div className="ml-[124px] pr-[5px]"><WinBtns gap="gap-[26px]" /></div>
          </div>
        </div>
        <div className="flex h-[38px] items-center justify-between pl-5 pt-1">
          <nav className="flex gap-[34px] whitespace-nowrap text-[#b9bec4]">
            {MENUS.map((m) => <button key={m}>{m}</button>)}
            <button className="-ml-2">源泉设计</button>
          </nav>
          <div className="pr-px"><WinBtns gap="gap-3" /></div>
        </div>
      </div>
    </header>
  );
}

function RibbonTabs() {
  return (
    <nav className="flex h-[38px] items-end pl-[5px] text-[21px] text-[#b3b8bf]">
      <button className="h-8 bg-[#3b444f] px-4 pb-0.5 leading-[30px] text-[#f0f2f4]">默认</button>
      <div className="flex gap-9 pb-0.5 pl-5 leading-[30px]">{TABS.map((t) => <button key={t}>{t}</button>)}</div>
      <button aria-label="最小化功能区" className="mb-[11px] ml-14 flex h-3.5 w-[26px] items-center justify-center bg-white"><Tri w={8} h={5} up c="#444" /></button>
      <span className="mb-4 ml-2"><Tri w={9} h={6} /></span>
    </nav>
  );
}

const tabUp = "[clip-path:polygon(0_100%,8px_92%,20px_14%,30px_0,calc(100%-30px)_0,calc(100%-20px)_14%,calc(100%-8px)_92%,100%_100%)]";
const tabDown = "[clip-path:polygon(0_0,100%_0,calc(100%-5px)_10%,calc(100%-14px)_90%,calc(100%-20px)_100%,20px_100%,14px_90%,5px_10%)]";

function FileTabs() {
  return (
    <div className="flex h-[46px] items-end pl-[22px] text-[21px]">
      <button className={`h-[38px] w-[236px] bg-[#2c353f] pl-[31px] text-left text-[#a4aab1] ${tabUp}`}>开始</button>
      <div className={`-ml-4 flex h-[38px] w-[244px] items-center justify-between bg-[#3b444f] pl-[26px] pr-[41px] text-[#eef0f2] ${tabUp}`}>
        <span>Drawing1*</span>
        <button aria-label="关闭图形"><svg width="16" height="16" viewBox="0 0 16 16" stroke="#a9afb6" strokeWidth="3"><path d="M1 1L15 15M15 1L1 15" /></svg></button>
      </div>
      <button aria-label="新图形" className="-ml-1 mb-1.5 flex h-7 w-8 items-center justify-center rounded rounded-tr-xl bg-[#323b46]"><svg width="14" height="14" viewBox="0 0 14 14" stroke="#a9afb6" strokeWidth="3"><path d="M7 0V14M0 7H14" /></svg></button>
    </div>
  );
}

/* ---------- model space ---------- */

const D = "7 2 2 1 2 2";
const Hs = ({ x1, x2, ys }) => <g strokeDasharray={D}>{ys.map((y) => <path key={y} d={`M${x1} ${y}H${x2}`} />)}</g>;
const Vs = ({ y1, y2, xs }) => <g strokeDasharray={D}>{xs.map((x) => <path key={x} d={`M${x} ${y1}V${y2}`} />)}</g>;

function Model() {
  return (
    <svg className="absolute inset-0 h-full w-full" aria-label="模型空间">
      <defs>
        <pattern id="minor" width="13.68" height="13.68" patternUnits="userSpaceOnUse" x="16" y="12"><path d="M0.500 0V14M0 0.500H14" stroke="#242c35" fill="none" /></pattern>
        <pattern id="major" width="68.4" height="68.4" patternUnits="userSpaceOnUse" x="16" y="58"><path d="M0.500 0V69M0 0.500H69" stroke="#303942" fill="none" /></pattern>
      </defs>
      <rect width="100%" height="100%" fill="url(#minor)" />
      <rect width="100%" height="100%" fill="url(#major)" />
      <g transform="translate(0 -337)" fill="none" stroke="#e6eaee" shapeRendering="crispEdges">
        <path d="M0 1284.500H2418" stroke="#54282b" />
        <g transform="translate(0.500 -0.500)">
          <path d="M127 715V686Q127 672 141 672H906Q920 672 920 686V715H719L715 708L711 715H336L332 708L328 715Z" />
          <Hs x1={127} x2={920} ys={[707]} /><Hs x1={127} x2={328} ys={[713]} /><Hs x1={336} x2={711} ys={[713]} /><Hs x1={719} x2={920} ys={[713]} />
          <g strokeDasharray="5 2"><path d="M332 672V707M715 672V707" /></g>

          <rect x="1068" y="684" width="370" height="30" /><Hs x1={1068} x2={1438} ys={[687, 695, 703, 711]} />
          <path d="M1561 688H1931V715L1927 719H1565L1561 715Z" /><Hs x1={1561} x2={1931} ys={[691, 704, 717]} />
          <path d="M1740 706h2M1751 706h2M1562 706h2M1927 706h2" strokeWidth="2" />

          <path d="M221 905V901H301V905H307V927H309V1073H305V1078H221V1073H216V905Z" />
          <Hs x1={216} x2={307} ys={[905, 1073]} /><Vs y1={905} y2={1078} xs={[221, 305]} />
          <path d="M230 916h2M230 942h2M301 922h3" strokeWidth="3" />

          <rect x="322" y="901" width="22" height="177" /><Vs y1={901} y2={1078} xs={[325, 330, 337, 341]} />
          <rect x="358" y="901" width="186" height="29" /><Hs x1={358} x2={544} ys={[904, 910, 921, 927]} />

          <path d="M557 907H575V901H616V1284H575V1278H557V1095H562V1089H557Z" />
          <Vs y1={907} y2={1278} xs={[560, 564, 568, 574]} /><Vs y1={901} y2={1284} xs={[577, 581, 606, 613]} />
          <rect x="629" y="901" width="373" height="27" /><Hs x1={629} x2={1002} ys={[903, 907, 925]} />

          <path d="M1107 890H1093V1106Q1094 1112 1097 1110Q1101 1106 1101 1100H1107Q1107 1114 1120 1114M1107 890V888H1304V890H1317V1087H1299V1114H1292V1123H1113L1120 1120V1114" />
          <Hs x1={1120} x2={1299} ys={[1114, 1120]} /><Hs x1={1107} x2={1304} ys={[890]} />
          <Vs y1={890} y2={1106} xs={[1096, 1101]} /><Vs y1={890} y2={1100} xs={[1107]} /><Vs y1={890} y2={1087} xs={[1304, 1310, 1315]} />

          <path d="M1454 853H1422L1417 848V1231L1422 1226H1454V1257L1448 1262H1640V1257Q1654 1257 1654 1243V1226H1668V853H1654V835Q1654 822 1640 822V817H1448L1454 822V853" />
          <Hs x1={1454} x2={1640} ys={[822, 1257]} /><Hs x1={1454} x2={1654} ys={[853, 1226]} />
          <Vs y1={853} y2={1226} xs={[1422, 1454, 1641, 1647, 1655, 1661, 1665]} />
          <rect x="1481" y="875" width="151" height="329" rx="8" /><circle cx="1469" cy="1040" r="5" shapeRendering="auto" />

          <rect x="1805" y="834" width="33" height="370" /><Vs y1={834} y2={1204} xs={[1807, 1810, 1815, 1827, 1830, 1833, 1836]} />
          <path d="M1908 877H1951V884H1908ZM1940 877V884" />
          <rect x="2018" y="822" width="37" height="373" /><Vs y1={822} y2={1195} xs={[2020, 2022, 2025, 2051]} /><circle cx="2037" cy="1008" r="5" shapeRendering="auto" />
          <rect x="2088" y="851" width="32" height="151" /><Vs y1={851} y2={1002} xs={[2091, 2095, 2117]} />

          <path d="M2241 882H2233V1058H2241V1067H2326L2329 1064V1058L2339 1054V886L2333 882H2329V876L2326 873H2241Z" />
          <Hs x1={2241} x2={2329} ys={[875, 879, 882, 1058, 1062, 1065]} /><Vs y1={882} y2={1058} xs={[2236, 2240, 2329, 2332, 2336]} />
          <path d="M2314 896h2M2314 922h2" strokeWidth="2" />

          <path d="M1241 448H1299M1309 448H1370M1305 384V443M1305 453V513" /><rect x="1300" y="443" width="9" height="9" />
          <path d="M26 1365V1445M33 1452H114" /><rect x="19" y="1445" width="14" height="14" />
        </g>
      </g>
      <g fill="#d5dae0" fontFamily="Lato" fontWeight="300" fontSize="30" textAnchor="middle">
        <text x="38" y="1023">Y</text>
        <text x="128" y="1113">X</text>
      </g>
    </svg>
  );
}

function ViewCube() {
  return (
    <div className="absolute right-[17px] top-[13px] flex w-[230px] flex-col items-center">
      <svg width="230" height="240" viewBox="0 -10 230 240" fontFamily="'Noto Sans CJK SC', sans-serif" fontSize="30" textAnchor="middle" fill="#9ea3a8" aria-label="ViewCube">
        <circle cx="115" cy="108" r="87" fill="none" stroke="#474d53" strokeWidth="20" />
        <rect x="73" y="67" width="83" height="83" fill="#b3b5b7" stroke="#8e9296" strokeWidth="2" />
        <rect x="89" y="83" width="52" height="52" fill="#a5adb4" />
        <text x="115" y="31">北</text>
        <text x="115" y="213">南</text>
        <text x="24" y="121">西</text>
        <text x="206" y="121">东</text>
        <text x="115" y="126" fontSize="48" fontFamily="'Noto Serif CJK SC', 'Noto Sans CJK SC', serif" fill="#50565c" fontWeight="300">上</text>
      </svg>
      <button className="mt-5 flex h-[29px] w-20 items-center justify-between rounded-md border-2 border-[#868b96] bg-[#9a9eaa] pl-1 pr-2 [font-family:'Liberation_Sans',sans-serif] text-[17px] text-[#4a4f59]">
        WCS <Tri w={12} h={7} c="#b9bcc6" />
      </button>
    </div>
  );
}

function CommandLine() {
  return (
    <div className="absolute bottom-0.5 left-[629px] flex h-11 w-[1157px] items-center bg-[#2a323c]">
      <span className="ml-3.5 h-8 border-l-2 border-dashed border-[#aab0b6]" />
      <button aria-label="关闭命令行" className="ml-2.5"><svg width="16" height="16" viewBox="0 0 16 16" stroke="#b5bac0" strokeWidth="3"><path d="M1 1L15 15M15 1L1 15" /></svg></button>
      <button aria-label="自定义" className="ml-[19px] mr-2"><Ico><path d="M4 25L16 12" stroke="#b5bac0" strokeWidth="5" strokeLinecap="round" /><path d="M25 5A7 7 0 1 1 19 3L18 9L21 10Z" fill="#b5bac0" stroke="none" /></Ico></button>
      <label className="flex h-11 flex-1 items-center gap-[5px] rounded-l bg-[#b7bdbb] px-2">
        <svg width="28" height="22" viewBox="0 0 28 22" fill="none" stroke="#555b5f" strokeWidth="2"><rect x="1" y="1" width="26" height="20" /><path d="M1 4H27" strokeWidth="5" /><path d="M4 9L9 12L4 15M11 16H18" /></svg>
        <Tri w={13} h={8} c="#4a5054" />
        <input aria-label="命令行" placeholder="键入命令" className="ml-1.5 flex-1 bg-transparent pb-0.5 text-[23px] italic outline-none placeholder:text-[#62686b]" />
        <Tri w={12} h={6} up c="#555b5f" />
      </label>
    </div>
  );
}

/* ---------- docked tool palettes ---------- */

const beige = "#ece9d8", pb = "#6f8fe0", lb = "#4f9be0", rd = "#ee1c24";
const Redown = ({ x = 14, y = 8 }) => <path d={`M${x - 2} ${y - 5}H${x + 2}V${y}H${x + 6}L${x} ${y + 6}L${x - 6} ${y}H${x - 2}Z`} fill={rd} stroke="none" />;
const Ends = ({ y = 18 }) => <g fill={pb} stroke="#000" strokeWidth="1.500"><rect x="-1" y={y} width="6" height="7" /><rect x="23" y={y} width="6" height="7" /></g>;
const Ends2 = ({ y = 18 }) => <g fill={beige} stroke="#000" strokeWidth="1.500"><rect x="1" y={y} width="3" height="4" /><rect x="24" y={y} width="3" height="4" /></g>;
const Leaf = () => <path d="M6 20V3Q22 3 23 20M6 20H23" stroke={lb} strokeWidth="1.500" />;
const Spark = ({ x = 12, y = 11 }) => <><Burst x={x} y={y} s={0.5} c="#f3b33e" /><path d={`M${x + 5} ${y - 4}L28 0`} stroke="#9a5a4a" strokeWidth="2.500" /></>;
const Win = ({ y = 17, h = 7 }) => <><rect x="5" y={y} width="18" height={h} fill="#d6ecfa" stroke={lb} strokeWidth="1.500" /><path d={`M5 ${y + h / 2}H23`} stroke={lb} strokeWidth="1.500" /></>;
const Wall = ({ y, h = 6, c = pb }) => <><rect x="1" y={y} width="25" height={h} fill={c} stroke="none" /><path d={`M1 ${y}H26M1 ${y + h}H26`} stroke="#000" strokeWidth="1.500" /></>;
const RCross = ({ x = 13, y = 13 }) => <path d={`M${x} 0V28M0 ${y}H28`} stroke={rd} strokeWidth="1.500" />;
const Check = () => <path d="M1 19L6 25L19 16" stroke={rd} strokeWidth="4" />;
const Lx = ({ children, x, y, c, s = 11 }) => <text x={x} y={y} fontSize={s} fontFamily="'DejaVu Sans Mono', monospace" fontWeight="bold" fill={c} stroke="none">{children}</text>;
const Er = () => <><Wall y={18} /><path d="M17 18H28M17 21H28M17 24H28" stroke={lb} strokeWidth="1.500" /><path d="M10 11L24 0H28V4L15 16Z" fill="#c9b23c" stroke="#555" strokeWidth="1" /><path d="M6 13L10 10L15 15L11 19H6Z" fill="#f0a8a0" stroke="#555" strokeWidth="1" /></>;
const Bucket = () => <path d="M9 8L18 1L27 9L18 17Z" fill="#c98c62" stroke="#6b4630" strokeWidth="1" />;
const Lr = () => <g stroke="none"><path d="M8 21L14 16V19H18V23H14V26Z" fill="#2a7cc8" /><path d="M28 21L22 16V19H18V23H22V26Z" fill={rd} /></g>;
const Qd = ({ o = 0 }) => <g fill="#f9ae2b" stroke="#000" strokeWidth="2">{(o ? [[8, 21], [20, 21]] : [[8, 8], [20, 8], [8, 21], [20, 21]]).map(([x, y]) => <g key={`${x}${y}`}><path d={`M${x - 7} ${y}H${x + 7}M${x} ${y - 6}V${y + 6}`} stroke={rd} strokeWidth="1" /><rect x={x - 3} y={y - 3} width="6" height="6" /></g>)}</g>;
const Sqs = ({ cs }) => <g strokeWidth="2">{cs.map((c, i) => <rect key={i} x={2 + (i % 3) * 9} y={2 + Math.floor(i / 3) * 9} width="6" height="5" stroke={c} />)}</g>;
const DoorSpark = <><Leaf /><Spark /><Ends /></>;
const DoorPlain = <><Leaf /><Ends2 y={19} /></>;
const WinSpark = <><Win /><Spark x={12} y={6} /><Ends y={16} /></>;
const WinPlain = <><Win y={16} /><Ends2 y={17} /></>;

const COLS = [
  [
    [
      <><path d="M0 0H28V16H0Z" fill="#fff" stroke="none" /><path d="M10 10L17 5A5 5 0 0 1 24 1L22 5L26 6A5 5 0 0 1 20 9L12 14Z" fill="#2588cc" stroke="none" /><rect y="15" width="28" height="13" fill="#333c46" stroke="none" /><Lx x={2} y={26} c="#fff" s={13}>SYS</Lx></>,
      <><Sqs cs={["#1a9", "#c44", "#83c", "#d4d", "#282"]} /><Bulb x={22} y={16} s={0.6} /></>,
      <><Sqs cs={["#999", "#999", "#777", "#999", "#999"]} /><Bulb x={22} y={16} s={0.6} c="#9fb6c8" /></>,
    ],
    [
      <><circle cx="12" cy="12" r="12" fill="#f0643c" stroke="none" /><path d="M5 13Q8 7 18 9V16Q12 22 6 17Z" fill="#fcd9b8" stroke="none" /><circle cx="8" cy="14" r="1.500" fill="#345" stroke="none" /><circle cx="15" cy="14" r="1.500" fill="#345" stroke="none" /><Lr /></>,
      <><Lx x={1} y={14} c="#111" s={14}>中</Lx><Lx x={17} y={14} c="#999" s={14}>E</Lx><Lr /></>,
      <><Lx x={3} y={10} c="#555" s={10}>m m</Lx><Redown y={14} /><Lx x={3} y={26} c="#111" s={10}>c m</Lx></>,
      <><rect width="28" height="7" fill="#10608e" stroke="none" /><rect x="13" y="7" width="9" height="17" fill="#fff" stroke="#0a4a70" /><path d="M15 12H21M15 16H21M15 20H21" stroke="#0a4a70" strokeWidth="1" /><path d="M10 18Q9 14 4 15" stroke="#2a7cc8" /></>,
    ],
    [
      <><rect x="3" y="2" width="20" height="13" fill="#fff" stroke="#777" /><Lx x={6} y={13} c={rd}>A2</Lx><path d="M0 20H26V28H0Z" fill="#4fb3e8" stroke="none" /><path d="M4 20V24M9 20V26M14 20V24M19 20V26" stroke="#0a4a70" strokeWidth="1" /></>,
      <><rect x="4" y="5" width="20" height="15" fill="#7cc1f2" stroke="#456" /><Lx x={7} y={16} c="#0a4a90">A2</Lx><rect x="1" y="21" width="4" height="4" stroke="#000" /></>,
    ],
    [
      <><rect width="28" height="28" fill="#2e6fae" stroke="none" /><Lx x={1} y={22} c="#fff" s={11}>yq</Lx><Lx x={13} y={21} c="#cfe4f6" s={22}>?</Lx></>,
      <><rect x="1" y="1" width="26" height="26" fill="#3d78ad" stroke="#fff" /><rect x="7" y="4" width="14" height="9" fill="#fff" stroke="none" /><Lx x={4} y={25} c="#fff" s={11}>Ver</Lx></>,
      <><rect width="28" height="28" fill="#a9d6f0" stroke="none" /><path d="M5 13H23V26H5Z" fill="#f4efe2" stroke="none" /><path d="M1 15L14 3L27 14" stroke="#c4452d" strokeWidth="5" /><path d="M10 18H16V26H10Z" fill="#7a3c1e" stroke="none" /><circle cx="22" cy="20" r="5" fill="#63b13c" stroke="none" /></>,
      <><rect width="28" height="28" fill="#1d4c78" stroke="none" /><path d="M12 0V28M0 13H28" stroke="#b9c9d8" strokeWidth="1.500" /><path d="M3 0V28M8 0V28M0 8H28M0 18H14M20 0V14" stroke="#49759c" strokeDasharray="2 1" /><rect x="15" y="15" width="12" height="11" fill={rd} stroke="none" /></>,
    ],
  ],
  [
    [
      <><path d="M6 2V12M6 15V27M1 21H12M18 21H26" stroke={rd} strokeWidth="2" strokeDasharray="7 2" /><path d="M13 26L15 19L25 0L28 2L20 21Z" fill="#c9b23c" stroke="#555" strokeWidth="1" /></>,
      <><path d="M2 8H27M2 21H27M7 1V27M20 1V27" stroke={rd} strokeDasharray="8 2 2 2" /></>,
    ],
    [
      <Wall y={10} />,
      <><path d="M3 0H9V28H3ZM0 3H28V9H0Z" fill={pb} stroke="#000" strokeWidth="1" /><path d="M1 13L22 18M1 19L20 12" stroke="#a84a22" strokeWidth="3" /><circle cx="23" cy="10" r="3.500" stroke="#a84a22" /><circle cx="23" cy="20" r="3.500" stroke="#a84a22" /></>,
      <><Wall y={1} h={4} /><Wall y={20} /><path d="M13 5L18 10H15V14H18L13 19L8 14H11V10H8Z" fill={rd} stroke="none" /></>,
      <><path d="M1 3H26" stroke="#000" /><Redown y={11} x={13} /><Wall y={18} h={7} /></>,
      <><path d="M2 0H7V28H2ZM21 0H26V28H21Z" fill={pb} stroke="none" /><path d="M2 0V28M7 0V28M21 0V28M26 0V28" stroke="#000" strokeWidth="1.500" /><path d="M13 3V11M9 7H17" stroke={rd} /><path d="M8 17H13V13L19 19L13 25V21H8Z" fill={rd} stroke="none" /></>,
    ],
    [
      <><rect x="3" y="2" width="21" height="6" fill="#999" stroke="none" /><Redown x={13} y={12} /><Wall y={18} /><path d="M0 22H28" stroke={rd} /></>,
      <><Bucket /><path d="M5 17Q5 8 12 6" stroke={pb} strokeWidth="3" /><Wall y={19} h={5} /></>,
    ],
    [
      <><RCross /><rect x="8" y="7" width="10" height="13" fill="#fde21a" stroke="#000" strokeWidth="2" /><path d="M13 9V18M10 13H17" stroke={rd} strokeWidth="1" /></>,
      <><RCross y={14} /><circle cx="13" cy="14" r="8.500" fill="#fde21a" stroke="#000" strokeDasharray="4 1" /><path d="M13 8V20M7 14H19" stroke={rd} strokeWidth="1" /></>,
      <><RCross x={9} y={19} /><path d="M7 2H12V16H23V22H7Z" fill="#fdc61a" stroke="#000" strokeWidth="2" /></>,
      <><RCross y={6} /><path d="M4 3H22V9H16V23H10V9H4Z" fill="#fdc61a" stroke="#000" strokeWidth="2" /></>,
      <><RCross /><path d="M10 3H16V10H22V16H16V23H10V16H4V10H10Z" fill="#fdc61a" stroke="#000" strokeWidth="2" /></>,
    ],
    [
      <Qd />,
      <><rect x="4" y="3" width="7" height="5" stroke="#999" /><rect x="16" y="3" width="7" height="5" stroke="#999" /><Redown y={12} x={13} /><Qd o={1} /></>,
      <><path d="M4 4H20V23H4Z" fill="#fde21a" stroke="#000" /><path d="M11 0V28M0 14H10" stroke={rd} strokeWidth="1.500" strokeDasharray="6 3" /><Bucket /></>,
    ],
    [<Er />],
  ],
  [
    [DoorSpark, DoorPlain, WinSpark, WinPlain,
      <><rect y="0" width="5" height="6" fill="#999" stroke="none" /><rect x="23" y="0" width="5" height="6" fill="#999" stroke="none" /><path d="M3 22V13H25V22" stroke={lb} /><Redown y={9} /><Ends /></>,
      <><Spark /><Ends y={16} /></>],
    [DoorSpark, DoorPlain, <><Leaf /><Redown x={23} y={5} /><Ends2 y={18} /></>],
    [WinSpark, WinPlain, <><path d="M3 20V9H25V20M8 20V13H20V20" stroke={lb} strokeWidth="1.500" /><Redown y={5} /><Ends /></>],
    [
      <><path d="M2 6H24V26M8 12H18" stroke={lb} strokeWidth="2" /><Spark x={15} y={14} /><rect x="0" y="11" width="8" height="6" fill={pb} stroke="#000" /><rect x="15" y="22" width="6" height="6" fill={pb} stroke="#000" /></>,
      <><path d="M6 6H24V26" stroke={lb} strokeWidth="2" /><Redown y={5} /><rect x="0" y="11" width="8" height="6" fill={pb} stroke="#000" /><rect x="15" y="20" width="6" height="6" fill={pb} stroke="#000" /></>,
    ],
    [
      <><Lx x={2} y={11} c={rd} s={10}>Sill</Lx><Win y={14} /><Ends2 y={16} /></>,
      <><Lx x={2} y={11} c={rd} s={10}>Ceil</Lx><rect x="5" y="14" width="18" height="7" stroke={lb} /><Ends2 y={16} /></>,
    ],
    [
      <><path d="M2 2H25" stroke="#000" /><Redown y={9} /><Win /><Ends2 /></>,
      <><path d="M9 5H17V1L25 7L17 13V9H9Z" fill="#2a8ad0" stroke="none" /><Win /><Ends2 /></>,
      <><path d="M12 3H19V0L27 5L19 11V7H12Z" fill="#2a8ad0" stroke="none" /><Win y={13} /><Ends y={12} /></>,
    ],
    [
      <><path d="M0 1H6V9H0ZM21 1H28V9H21Z" fill="#999" stroke="#555" /><Redown y={11} /><Win y={18} /><Ends /></>,
      <><rect width="28" height="28" fill="#fff" stroke="none" /><path d="M14 3V24M3 13H25" stroke="#3f6d9a" strokeWidth="3" /><path d="M14 0L19 6H9ZM0 13L5 8V18ZM28 13L23 8V18ZM14 28L19 22H9Z" fill="#3f6d9a" stroke="none" /><Check /></>,
      <><rect width="28" height="28" fill="#fff" stroke="none" /><circle cx="6" cy="5" r="5" fill="#ddd" stroke="#555" /><path d="M12 2Q20 1 22 8" stroke="#1d5c98" /><path d="M17 6H26L22 12Z" fill="#1d5c98" stroke="none" /><circle cx="17" cy="18" r="5" stroke="#555" /><circle cx="23" cy="22" r="5" fill="#ddd" stroke="#555" /><Check /></>,
      <><rect width="28" height="28" fill="#fff" stroke="none" /><path d="M10 5V21H3ZM19 5V21H27Z" stroke="#222" /><path d="M14 0V25" stroke="#2a8ad0" /><Check /></>,
    ],
    [
      <><path d="M6 2Q20 2 23 14V26Q7 26 6 12Z" stroke={lb} strokeWidth="1.500" /><path d="M14 5L19 10H16V16H19L14 21L9 16H12V10H9Z" fill={rd} stroke="none" /><Ends y={11} /></>,
      <><path d="M0 1H28V7H0Z" fill={pb} stroke="none" /><path d="M7 1H20V7H7Z" fill="#d6ecfa" stroke={lb} /><path d="M5 26V12Q14 10 16 20" stroke={lb} /><path d="M10 20L20 15L26 19L17 26Z" fill="#b5651d" stroke="none" /><rect y="18" width="5" height="8" fill={pb} stroke="none" /></>,
    ],
    [<Er />],
    [<><Lx x={4} y={11} c={rd} s={11}>C01</Lx><Win y={16} /><Ends2 y={17} /></>],
  ],
];

const Grip = () => <div className="mb-1.5 mt-1 flex h-[7px] items-center px-1"><span className="h-[5px] w-6 border-y-2 border-dotted border-[#d9dbdd]" /></div>;

function Docks() {
  return (
    <aside className="flex shrink-0 items-start gap-[3px] bg-[#3b444f] pl-1" aria-label="源泉工具栏">
      {COLS.map((groups, c) => (
        <div key={c} className="self-start">
          <div className="flex w-11 flex-col border-2 border-[#29313c] px-1 pb-[5px] pt-0.5">
            <Grip />
            {groups.map((g, i) => (
              <div key={i}>
                {i > 0 && <div className="mb-[7px] mt-2 h-0.5 bg-[#d9dbdd]" />}
                <div className="flex flex-col items-center gap-[11px]">
                  {g.map((icon, j) => (
                    <button key={j} aria-label={`工具 ${c + 1}-${i + 1}-${j + 1}`} className="h-7 w-7 overflow-hidden bg-[#ece9d8]"><Ico>{icon}</Ico></button>
                  ))}
                </div>
              </div>
            ))}
          </div>
          {c === 2 && <div className="w-11 border-2 border-b-0 border-[#29313c] px-1 pt-0.5"><Grip /></div>}
        </div>
      ))}
    </aside>
  );
}

/* ---------- status bar ---------- */

const S = ({ label, on, w = "w-[42px]", children }) => (
  <button aria-label={label} aria-pressed={!!on} className={`flex h-10 shrink-0 items-center justify-center ${w} ${on ? "bg-[#5b8cbf]" : ""}`}>
    <Ico>{children}</Ico>
  </button>
);
const Ar = ({ w = "w-7" }) => <button aria-label="更多" className={`flex h-10 shrink-0 items-center justify-center ${w}`}><Tri w={14} h={9} /></button>;
const Seg = ({ children, className = "" }) => <div className={`flex h-[42px] items-center gap-[3px] bg-[#39424d] ${className}`}>{children}</div>;
const Person = () => <path d="M14 1L18 15L25 26L17 21L14 16L11 21L3 26L10 15Z" fill={W} stroke="none" />;

function StatusBar() {
  return (
    <div className="flex h-[46px] items-start justify-between bg-[#20272f] text-[21px]">
      <div className="flex items-start pl-[9px] leading-[28px] text-[#a4aab1]">
        <button className={`h-8 w-[98px] bg-[#3b444f] pb-1 font-bold text-white ${tabDown}`}>模型</button>
        <button className={`-ml-1 h-8 w-[94px] bg-[#2c353f] pb-1 ${tabDown}`}>布局1</button>
        <button className={`ml-0.5 h-8 w-[94px] bg-[#2c353f] pb-1 ${tabDown}`}>布局2</button>
        <button aria-label="新建布局" className="ml-2.5 flex h-7 w-9 items-center justify-center rounded-b-lg rounded-tl-lg bg-[#2c353f]"><svg width="14" height="14" viewBox="0 0 14 14" stroke="#a9afb6" strokeWidth="3"><path d="M7 0V14M0 7H14" /></svg></button>
      </div>
      <div className="flex gap-1.5 pt-px text-[#f2f4f5]">
        <Seg className="w-[315px] justify-end pr-2 [font-family:'Noto_Sans_CJK_SC',sans-serif]">5961.0549, 3053.8145, 0.0000</Seg>
        <Seg className="w-12 justify-center"><button>模型</button></Seg>
        <Seg className="w-28">
          <S label="栅格" on w="w-10"><path d="M8 0V28M14 0V28M20 0V28M0 8H28M0 14H28M0 20H28" /></S>
          <S label="捕捉" w="w-10"><path d="M3 4H26M3 11H26M3 18H26M3 25H26" strokeWidth="3" strokeDasharray="3 7" /></S>
          <Ar />
        </Seg>
        <Seg className="w-[297px]">
          <S label="正交"><path d="M2 0V26H28M2 15H12V26" /></S>
          <S label="极轴" w="w-9"><circle cx="12" cy="15" r="10" /><path d="M12 15H26M12 15L22 1" /></S>
          <Ar />
          <S label="等轴测" w="w-9"><path d="M4 2L24 26" stroke="#d8646a" /><path d="M16 0V28" stroke="#55b06a" /><Sq x={15} y={14} s={5} c={W} /></S>
          <Ar />
          <S label="对象追踪" on w="w-[38px]"><path d="M24 2L3 25H27M10 17A10 10 0 0 1 14 25" /></S>
          <S label="对象捕捉" on w="w-[38px]"><rect x="6" y="6" width="20" height="20" /><rect x="1" y="1" width="8" height="8" fill="#5b8cbf" /></S>
          <Ar />
        </Seg>
        <Seg className="w-[41px]"><S label="动态输入" on w="w-10"><path d="M4 4V24H24" /><path d="M0 7L4 0L8 7ZM21 20L28 24L21 28ZM19 3L13 12H17L15 19L23 9H19L21 3Z" fill={W} stroke="none" /></S></Seg>
        <Seg className="w-[184px]">
          <S label="注释可见性" on w="w-[38px]"><Person /><circle cx="23" cy="6" r="4" /></S>
          <S label="自动缩放"><Person /><path d="M22 0L17 8H21L19 14L27 5H23L26 0Z" fill={W} stroke="none" /></S>
          <S label="注释比例" w="w-[38px]"><Person /></S>
          <button className="flex items-center gap-1">1:1<Tri w={14} h={9} /></button>
        </Seg>
        <Seg className="w-[113px]">
          <button aria-label="切换工作空间" className="shrink-0 px-1"><Gear s={30} /></button>
          <Ar />
          <S label="注释监视器" w="w-9"><path d="M14 0V28M0 14H28" strokeWidth="3" /></S>
        </Seg>
        <Seg><S label="隔离对象"><rect x="1" y="1" width="9" height="13" /><circle cx="22" cy="9" r="5.500" /><path d="M11 18L16 27H6Z" /></S></Seg>
        <Seg className="w-[95px] justify-end pr-1">
          <S label="全屏显示" w="w-[38px]"><rect x="1" y="2" width="26" height="24" /><path d="M15 13L22 6M16 6H22V12M13 15L6 22M6 16V22H12" /></S>
          <S label="自定义" w="w-[38px]"><path d="M0 3H28M0 14H28M0 25H28" strokeWidth="4" /></S>
        </Seg>
      </div>
    </div>
  );
}

/* ---------- taskbar ---------- */

const K = ({ label, bar, active, w = "w-[87px]", children }) => (
  <button aria-label={label} className={`relative flex h-[70px] items-center justify-center pb-0.5 ${w} ${active ? "bg-white/60" : ""}`}>
    {children}
    {bar && <span className={`absolute bottom-0 h-1 bg-[#c7306d] ${active ? "w-full" : "w-[71px]"}`} />}
  </button>
);
const Tk = ({ s = 42, children }) => <svg width={s} height={s} viewBox={`0 0 ${s} ${s}`} fill="none" className="shrink-0">{children}</svg>;

function Taskbar() {
  return (
    <footer className="flex h-[70px] items-center justify-between bg-[linear-gradient(90deg,#cfdce4_0%,#cfdce4_30%,#e3d9dc_35%,#e6dbdb_52%,#dedbe2_61%,#d0dce6_70%,#cfdce5_80%,#dadce0_87%,#e6dcda_100%)] text-[#111]">
      <div className="flex">
        <K label="开始" w="w-[84px]"><Tk s={26}><path d="M1 4L11 2.500V12H1ZM13 2L26 0V12H13ZM1 14H11V23.500L1 22ZM13 14H26V26L13 24Z" fill="#000" /></Tk></K>
        <K label="搜索" w="w-[84px]"><Tk s={32}><circle cx="20" cy="12" r="10" stroke="#111" strokeWidth="1.800" /><path d="M13 19L1 31" stroke="#111" strokeWidth="1.800" /></Tk></K>
        <K label="Cortana" w="w-[86px]"><Tk s={30}><circle cx="15" cy="15" r="12.500" stroke="#000" strokeWidth="4" /></Tk></K>
        <K label="网易云音乐"><Tk><rect width="42" height="42" rx="8" fill="#d8001b" /><path d="M31 8C26 5 22 8 23 13L25 24C26 30 17 31 16 25C15 20 20 17 24 17C31 17 34 22 33 27C31 37 15 38 10 30C6 22 10 15 17 13" stroke="#fff" strokeWidth="3" strokeLinecap="round" /></Tk></K>
        <K label="文件资源管理器" bar><Tk s={38}><path d="M0 3H14L18 7V12H0Z" fill="#d9961e" /><path d="M0 9H14L19 5H38V34H0Z" fill="#fbd355" /><path d="M7 34V22Q7 19 10 19H28Q31 19 31 22V34H25V27H13V34Z" fill="#3b93d8" /></Tk></K>
        <K label="搜狗浏览器" bar><Tk><circle cx="21" cy="21" r="20" fill="#fff" /><path d="M19 3A18 18 0 0 0 9 34C18 40 22 30 16 24C8 17 12 8 19 3Z" fill="#3f8fe8" /><path d="M24 39A18 18 0 0 0 33 8C26 1 19 9 24 16C33 25 33 33 24 39Z" fill="#3f8fe8" /></Tk></K>
        <K label="微信"><Tk><circle cx="16" cy="17" r="15" fill="#27cf6a" /><path d="M5 26L7 33L14 30Z" fill="#27cf6a" /><circle cx="30" cy="26" r="12" fill="#f1f3f2" /><path d="M34 36L38 40L39 33Z" fill="#f1f3f2" /><g fill="#14582f"><circle cx="11" cy="13" r="2" /><circle cx="21" cy="13" r="2" /></g><g fill="#555"><circle cx="26" cy="24" r="1.700" /><circle cx="34" cy="24" r="1.700" /></g></Tk></K>
        <K label="WPS" bar><Tk><path d="M1 6H22L21 12H10L16 35L13 36L8 33Z" fill="#f33b2c" /><path d="M22 6H29L18 36H13Z" fill="#ff7a3d" /><path d="M24 17L28 28L35 12H25L27 6H42L32 36H26L21 24Z" fill="#f0412c" /></Tk></K>
        <K label="AutoCAD" bar active><span className="bg-[#fbe9e0] px-1 py-1"><svg width="32" height="32" viewBox="0 0 44 50"><path d="M16 0H28L44 50H32L29 38L19 34L12 50H0Z" fill="#a8252b" /><path d="M16 0L22 12L12 50H0Z" fill="#d8454a" /><path d="M22 14L27 28H18Z" fill="#fbe9e0" /></svg></span></K>
        <K label="录屏" bar><Tk s={20}><circle cx="9" cy="10" r="6.500" stroke="#f7b6b2" strokeWidth="1.500" fill="#fff" /><circle cx="9" cy="10" r="5" fill="#ee3b3b" /><path d="M14 10L18 6V14Z" fill="#e58a86" /></Tk></K>
      </div>
      <div className="flex items-center pb-0.5">
        <svg width="90" height="36" viewBox="0 0 90 36" fill="none">
          <path d="M5 1V9M14 1V9" stroke="#fff" strokeWidth="4" /><path d="M0 9H19V17Q18 23 12 24V35H7V24Q1 23 0 17Z" fill="#fff" stroke="#999" />
          <rect x="21" y="3" width="62" height="31" rx="3" fill="#1b9440" stroke="#fff" strokeWidth="4" /><rect x="19" y="1" width="66" height="35" rx="4" stroke="#888" strokeWidth="1" /><rect x="85" y="11" width="4" height="14" fill="#fff" stroke="#888" />
          <text x="52" y="25" fontSize="19" textAnchor="middle" fill="#fff" fontFamily="Open Sans">100%</text>
        </svg>
        <button className="ml-[152px] flex items-center text-[25px]">
          <svg width="42" height="30" viewBox="0 0 42 30"><path d="M9 29A9 9 0 0 1 7 12A12 12 0 0 1 28 5A10 10 0 0 1 38 17Q41 27 32 29Z" fill="#8ccbf2" /><path d="M9 29A9 9 0 0 1 7 12Q18 12 20 20T36 29Z" fill="#bfe2f7" /></svg>
          <span className="ml-4">16°C</span><span className="ml-3.5">大雾</span>
        </button>
        <div className="ml-6 flex items-center gap-3.5">
          <Tk s={28}><path d="M5 18L14 9L23 18" stroke="#111" strokeWidth="2" /></Tk>
          <Tk s={28}><path d="M6 22A6 6 0 0 1 5 12A9 9 0 0 1 22 10A6 6 0 0 1 22 22Z" fill="#eee" stroke="#333" strokeWidth="1.500" /><path d="M2 17Q3 12 8 11Q12 3 20 9L10 20Z" fill="#777" /></Tk>
          <Tk s={28}><rect x="4" y="1" width="20" height="26" rx="10" fill="#0a78e0" /><path d="M9 9L18 18L14 22V6L18 10L9 19" stroke="#fff" strokeWidth="1.800" /></Tk>
          <Tk s={28}><path d="M2 1L14 7L26 1V22L14 28L2 22Z" fill="#b52a33" /><path d="M8 21V11L14 16L20 11V21" stroke="#f3e3e3" strokeWidth="3" /></Tk>
          <Tk s={28}><circle cx="14" cy="14" r="13" fill="#3f82ee" /><path d="M11 7V18H19" stroke="#fff" strokeWidth="4" /></Tk>
          <Tk s={28}><path d="M2 10H6L12 5V23L6 18H2ZM16 10Q18 14 16 18M20 7Q24 14 20 21M24 4Q30 14 24 24" stroke="#222" strokeWidth="1.800" /></Tk>
          <Tk s={28}><path d="M1 5L26 1V24L1 26Z" stroke="#222" strokeWidth="2" /><path d="M8 14Q10 8 17 11M18 14Q16 20 9 18M17 7V12H13" stroke="#222" strokeWidth="2" /><circle cx="22" cy="21" r="6" fill="#f59a1b" /></Tk>
          <Tk s={28}><rect x="8" y="8" width="18" height="13" stroke="#000" strokeWidth="2" /><rect x="11" y="11" width="12" height="7" fill="#000" /><path d="M26 12H28V17H26M3 3V7M8 3V7" stroke="#000" strokeWidth="2" /><path d="M1 7H10V12L7 14V21H4V14L1 12Z" fill="#000" /></Tk>
          <Tk s={28}><path d="M3 26Q4 6 25 4M9 26Q10 12 25 10M15 26Q16 18 25 16M21 26Q22 23 25 22" stroke="#333" strokeWidth="1.500" /></Tk>
          <button className="text-[28px] leading-7 text-[#777]">英</button>
          <span className="ml-2 flex"><Tk s={30}><path d="M6 4L29 1L25 27L2 30Z" fill="#f0592b" /><path d="M22 8Q9 6 10 11Q11 14 17 15Q23 17 20 21Q17 24 8 22" stroke="#fff" strokeWidth="3.500" /></Tk></span>
        </div>
        <button className="ml-8 flex flex-col items-center text-[21px] leading-8"><span>10:41</span><span>2022/1/16</span></button>
        <button aria-label="通知" className="ml-8 border-r border-[#a9a9ad] pr-8">
          <Tk s={32}><path d="M1 2H30V20Q24 22 22 27H14L10 31V27H1Z" fill="#000" /><path d="M6 8H24M6 13H24M6 18H18" stroke="#fff" strokeWidth="2" /><path d="M25 17A7 7 0 1 1 19 29A9 9 0 0 0 25 17Z" fill="#000" stroke="#fff" /></Tk>
        </button>
        <span className="w-2" />
      </div>
    </footer>
  );
}

export default function App() {
  return (
    <div className="flex min-h-screen flex-col overflow-hidden bg-[#20272f] [font-family:'Open_Sans','Noto_Sans_CJK_SC',sans-serif]">
      <TitleArea />
      <RibbonTabs />
      <Ribbon />
      <FileTabs />
      <div className="border-t-[3px] border-[#3b444f]"><div className="border-b-[3px] border-t-2 border-b-[#3b444f] border-t-black" /></div>
      <main className="flex flex-1 border-b-2 border-[#3d4550]">
        <div className="relative min-w-0 flex-1 overflow-hidden bg-[#1f262f]">
          <Model />
          <p className="absolute left-0 top-1.5 text-[22px] leading-7 text-[#eceef0]">[−][俯视][二维线框]</p>
          <ViewCube />
          <CommandLine />
        </div>
        <Docks />
      </main>
      <StatusBar />
      <Taskbar />
    </div>
  );
}
